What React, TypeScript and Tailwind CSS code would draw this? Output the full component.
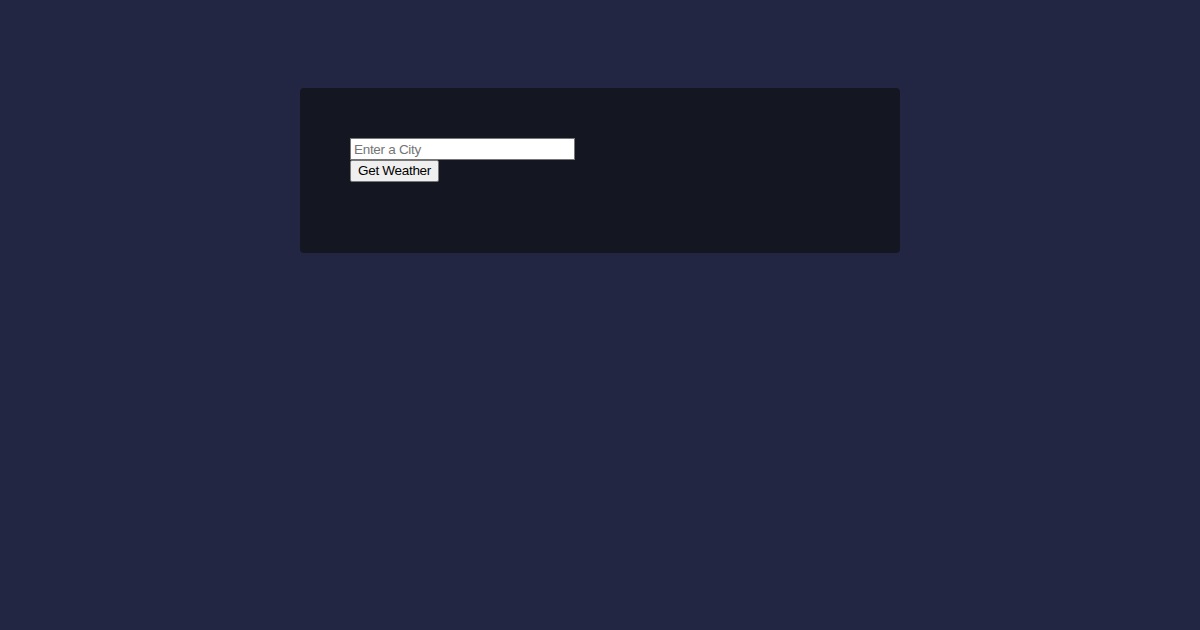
import React from 'react'

export default function App() {
    return (
        <div className="min-h-[630px] w-full bg-[#232642] pt-[88px] font-['Liberation_Sans',Arial,sans-serif]">
            <div className="mx-auto w-[600px] h-[165px] rounded-[4px] bg-[#141621] px-[50px] pt-[50px]">
                <div className="flex flex-col items-start">
                    <input
                        type="text"
                        placeholder="Enter a City"
                        className="w-[225px] h-[22px] bg-white border border-[#767676] px-[3px] text-[13.5px] tracking-[-0.3px] text-black placeholder:text-[#757575] outline-none"
                    />
                    <button className="h-[22px] px-[7px] bg-[#efefef] border border-[#767676] rounded-[2px] text-[13.5px] tracking-[-0.3px] text-black leading-none">
                        Get Weather
                    </button>
                </div>
            </div>
        </div>
    )
}
